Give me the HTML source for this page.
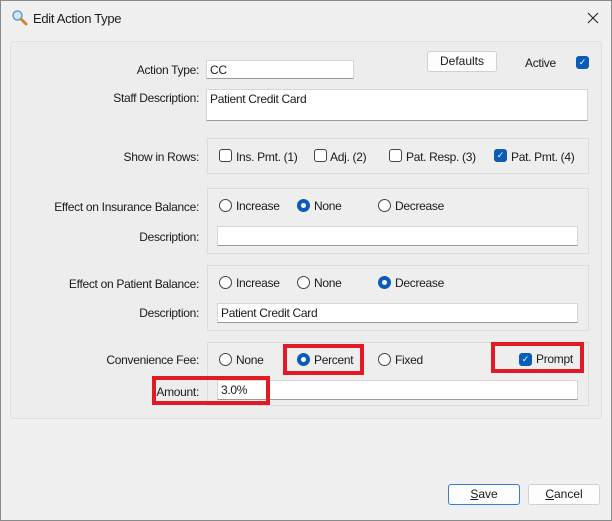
<!DOCTYPE html><html><head><style>
*{box-sizing:border-box;margin:0;padding:0}
body{width:612px;height:521px;background:#f0f0f0;font-family:"Liberation Sans",sans-serif;font-size:12px;color:#1a1a1a;position:relative;overflow:hidden;border:1px solid #8a8a8a}
.a{position:absolute;white-space:nowrap;letter-spacing:-0.3px}
.l{position:absolute;right:412px;white-space:nowrap;letter-spacing:-0.3px}
.box{position:absolute;border:1px solid #dcdcdc;background:#eeeeee}
.in{position:absolute;background:#fff;border:1px solid #d6d6d6;border-bottom-color:#9a9a9a;padding:2px 3px;font-size:12px;letter-spacing:-0.3px}
.rb{position:absolute;width:13px;height:13px;border-radius:50%;border:1px solid #444;background:#fff}
.rb.on{background:#0a5cb8;border-color:#0a5cb8}
.rb.on::after{content:"";position:absolute;left:3px;top:3px;width:5px;height:5px;border-radius:50%;background:#fff}
.cb{position:absolute;width:13px;height:13px;border-radius:3px;border:1px solid #444;background:#fff}
.cb.on{background:#0a5cb8;border-color:#0a5cb8;color:#fff;font-size:9px;line-height:11px;text-align:center}
.red{position:absolute;border:4px solid #e01b24}
.btn{position:absolute;border:1px solid #d0d0d0;border-radius:3px;background:#fdfdfd;text-align:center;line-height:19px}
</style></head><body>
<svg class="a" style="left:10px;top:8px" width="18" height="18" viewBox="0 0 18 18"><circle cx="6.5" cy="6.5" r="4.5" fill="#cfe6f7" stroke="#6a9cc4" stroke-width="1.5"/><line x1="10" y1="10" x2="15" y2="15" stroke="#c8893a" stroke-width="3" stroke-linecap="round"/></svg>
<div class="a" style="left:32px;top:10px;font-size:13px">Edit Action Type</div>
<svg class="a" style="left:586px;top:11px" width="12" height="12" viewBox="0 0 12 12"><path d="M1 1L11 11M11 1L1 11" stroke="#222" stroke-width="1.1"/></svg>
<div class="box" style="left:9px;top:40px;width:592px;height:378px;border-radius:4px;background:#ededed;border-color:#e0e0e0"></div>
<div class="l" style="top:62px">Action Type:</div>
<div class="in" style="left:205px;top:59px;width:148px;height:19px">CC</div>
<div class="btn" style="left:426px;top:50px;width:70px;height:21px">Defaults</div>
<div class="a" style="left:524px;top:55px">Active</div>
<div class="cb on" style="left:575px;top:55px">✓</div>
<div class="l" style="top:90px">Staff Description:</div>
<div class="in" style="left:205px;top:88px;width:382px;height:32px">Patient Credit Card</div>

<div class="box" style="left:206px;top:137px;width:382px;height:36px"></div>
<div class="l" style="top:149px">Show in Rows:</div>
<div class="cb" style="left:218px;top:148px"></div><div class="a" style="left:235px;top:149px">Ins. Pmt. (1)</div>
<div class="cb" style="left:313px;top:148px"></div><div class="a" style="left:329px;top:149px">Adj. (2)</div>
<div class="cb" style="left:388px;top:148px"></div><div class="a" style="left:405px;top:149px">Pat. Resp. (3)</div>
<div class="cb on" style="left:493px;top:148px">✓</div><div class="a" style="left:510px;top:149px">Pat. Pmt. (4)</div>

<div class="box" style="left:206px;top:187px;width:382px;height:66px"></div>
<div class="l" style="top:199px">Effect on Insurance Balance:</div>
<div class="rb" style="left:218px;top:198px"></div><div class="a" style="left:235px;top:198px">Increase</div>
<div class="rb on" style="left:296px;top:198px"></div><div class="a" style="left:313px;top:198px">None</div>
<div class="rb" style="left:377px;top:198px"></div><div class="a" style="left:394px;top:198px">Decrease</div>
<div class="l" style="top:229px">Description:</div>
<div class="in" style="left:216px;top:225px;width:361px;height:20px"></div>

<div class="box" style="left:206px;top:264px;width:382px;height:66px"></div>
<div class="l" style="top:276px">Effect on Patient Balance:</div>
<div class="rb" style="left:218px;top:275px"></div><div class="a" style="left:235px;top:275px">Increase</div>
<div class="rb" style="left:296px;top:275px"></div><div class="a" style="left:313px;top:275px">None</div>
<div class="rb on" style="left:377px;top:275px"></div><div class="a" style="left:394px;top:275px">Decrease</div>
<div class="l" style="top:305px">Description:</div>
<div class="in" style="left:216px;top:302px;width:361px;height:20px">Patient Credit Card</div>

<div class="box" style="left:206px;top:341px;width:382px;height:64px"></div>
<div class="l" style="top:352px">Convenience Fee:</div>
<div class="rb" style="left:218px;top:352px"></div><div class="a" style="left:235px;top:352px">None</div>
<div class="rb on" style="left:296px;top:352px"></div><div class="a" style="left:313px;top:352px">Percent</div>
<div class="rb" style="left:377px;top:352px"></div><div class="a" style="left:394px;top:352px">Fixed</div>
<div class="cb on" style="left:518px;top:352px">✓</div><div class="a" style="left:535px;top:351px">Prompt</div>
<div class="l" style="top:384px">Amount:</div>
<div class="in" style="left:216px;top:379px;width:361px;height:20px">3.0%</div>
<div class="red" style="left:282px;top:343px;width:81px;height:31px"></div>
<div class="red" style="left:490px;top:341px;width:93px;height:31px"></div>
<div class="red" style="left:151px;top:375px;width:118px;height:29px"></div>

<div class="btn" style="left:447px;top:483px;width:72px;height:21px;border-color:#3a7bd5"><u>S</u>ave</div>
<div class="btn" style="left:527px;top:483px;width:72px;height:21px"><u>C</u>ancel</div>
</body></html>
